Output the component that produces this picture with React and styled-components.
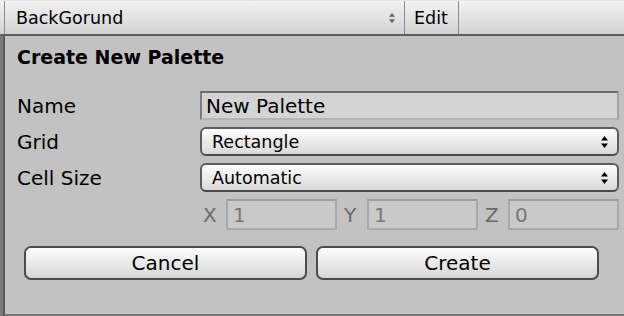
import React from 'react';
import styled, { createGlobalStyle } from 'styled-components';

const GlobalStyle = createGlobalStyle`
  html, body {
    margin: 0;
    padding: 0;
    background: #7a7a7a;
  }
  * {
    box-sizing: border-box;
  }
`;

const Window = styled.div`
  display: flex;
  flex-direction: column;
  width: 624px;
  height: 316px;
  font-family: 'DejaVu Sans', 'Liberation Sans', sans-serif;
  color: #000;
  overflow: hidden;
`;

const TopBar = styled.div`
  display: flex;
  height: 36px;
  flex: none;
  background: linear-gradient(#f2f2f2, #d3d3d3);
  border-top: 1px solid #e6e6e6;
  border-bottom: 2px solid #5e5e5e;
  font-size: 17.5px;
`;

const BarSegment = styled.div`
  display: flex;
  align-items: center;
  width: ${(p) => p.width || 'auto'};
  flex: ${(p) => (p.grow ? 1 : 'none')};
  padding: 0 ${(p) => p.padRight ?? p.pad ?? 0}px 0 ${(p) => p.pad || 0}px;
  border-right: ${(p) => (p.last ? 'none' : '1px solid #8c8c8c')};
`;

const PopupLabel = styled.span`
  flex: 1;
`;

const Body = styled.div`
  display: flex;
  flex: 1;
`;

const LeftStrip = styled.div`
  width: 5px;
  flex: none;
  background: #7a7a7a;
  border-right: 2px solid #5a5a5a;
`;

const Panel = styled.div`
  flex: 1;
  display: flex;
  flex-direction: column;
  background: #c2c2c2;
  border-bottom: 2px solid #777;
  padding: 9px 5px 0 12px;
`;

const Title = styled.div`
  font-size: 19px;
  font-weight: bold;
  line-height: 24px;
  margin-bottom: 22px;
`;

const Form = styled.div`
  display: flex;
  flex-direction: column;
  gap: 7px;
`;

const Row = styled.div`
  display: flex;
  align-items: center;
  height: 29px;
`;

const Label = styled.div`
  width: 183px;
  flex: none;
  font-size: 20px;
`;

const TextField = styled.div`
  flex: 1;
  height: 100%;
  display: flex;
  align-items: center;
  padding-left: 4px;
  font-size: 20px;
  background: #d4d4d4;
  border: 2px solid;
  border-color: #6c6c6c #a4a4a4 #b4b4b4 #7c7c7c;
`;

const Popup = styled.div`
  flex: 1;
  height: 100%;
  display: flex;
  align-items: center;
  padding: 0 9px 0 10px;
  font-size: 17.5px;
  background: linear-gradient(#fcfcfc, #dadada);
  border: 2px solid #5c5c5c;
  border-bottom-color: #4a4a4a;
  border-radius: 6px;
`;

const VectorRow = styled.div`
  flex: 1;
  height: 100%;
  display: grid;
  grid-template-columns: repeat(3, 1fr);
  gap: 4px;
`;

const Axis = styled.div`
  display: flex;
  align-items: center;
  height: 31px;
`;

const AxisLabel = styled.span`
  width: 26px;
  flex: none;
  padding-left: 3px;
  font-size: 20px;
  color: #6a6a6a;
`;

const NumberField = styled.div`
  flex: 1;
  height: 100%;
  display: flex;
  align-items: center;
  padding-left: 5px;
  font-size: 20px;
  color: #777;
  background: #c9c9c9;
  border: 2px solid #a8a8a8;
  border-top-color: #9e9e9e;
`;

const Buttons = styled.div`
  display: flex;
  gap: 9px;
  margin: 18px 20px 0 7px;
`;

const Button = styled.button`
  flex: 1;
  height: 34px;
  font-family: inherit;
  font-size: 20px;
  color: #000;
  background: linear-gradient(#fdfdfd, #d6d6d6);
  border: 2px solid #4c4c4c;
  border-radius: 7px;
  padding: 0;
`;

const Arrows = ({ color = '#000', w = 7, h = 14 }) => (
  <svg width={w} height={h} viewBox="0 0 7 14">
    <polygon points="3.5,1 7,5.5 0,5.5" fill={color} />
    <polygon points="0,8.5 7,8.5 3.5,13" fill={color} />
  </svg>
);

export default function App() {
  return (
    <>
      <GlobalStyle />
      <Window>
        <TopBar>
          <BarSegment width="5px" />
          <BarSegment grow pad={11} padRight={9}>
            <PopupLabel>BackGorund</PopupLabel>
            <Arrows color="#666" w={6} h={12} />
          </BarSegment>
          <BarSegment width="54px" pad={9}>
            Edit
          </BarSegment>
          <BarSegment width="165px" last />
        </TopBar>
        <Body>
          <LeftStrip />
          <Panel>
            <Title>Create New Palette</Title>
            <Form>
              <Row>
                <Label>Name</Label>
                <TextField>New Palette</TextField>
              </Row>
              <Row>
                <Label>Grid</Label>
                <Popup>
                  <PopupLabel>Rectangle</PopupLabel>
                  <Arrows />
                </Popup>
              </Row>
              <Row>
                <Label>Cell Size</Label>
                <Popup>
                  <PopupLabel>Automatic</PopupLabel>
                  <Arrows />
                </Popup>
              </Row>
              <Row>
                <Label />
                <VectorRow>
                  {[
                    ['X', '1'],
                    ['Y', '1'],
                    ['Z', '0'],
                  ].map(([axis, value]) => (
                    <Axis key={axis}>
                      <AxisLabel>{axis}</AxisLabel>
                      <NumberField>{value}</NumberField>
                    </Axis>
                  ))}
                </VectorRow>
              </Row>
            </Form>
            <Buttons>
              <Button>Cancel</Button>
              <Button>Create</Button>
            </Buttons>
          </Panel>
        </Body>
      </Window>
    </>
  );
}
